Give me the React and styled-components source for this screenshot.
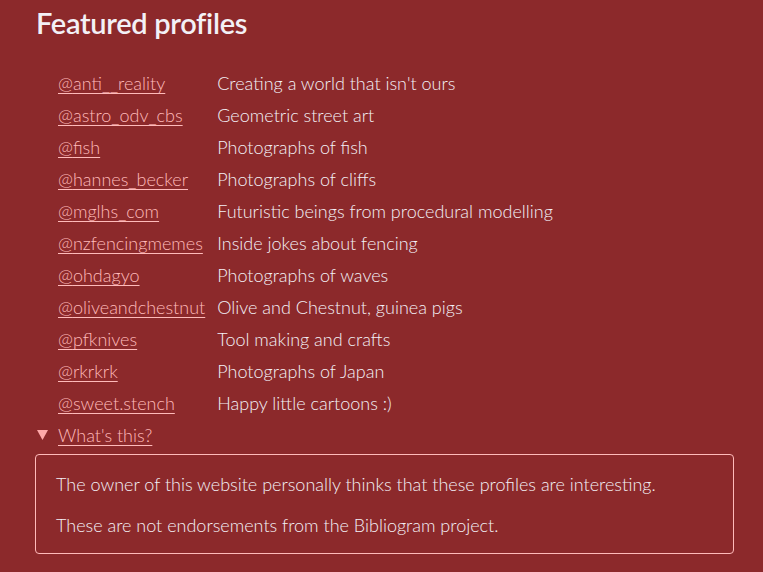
import React from 'react';
import styled, { createGlobalStyle } from 'styled-components';

const GlobalStyle = createGlobalStyle`
  html, body {
    margin: 0;
    padding: 0;
    background: #8c292b;
  }
  body {
    font-family: Lato, "Open Sans", sans-serif;
    color: #f3f0f6;
  }
`;

const Page = styled.main`
  padding: 4px 29px 20px 35px;
`;

const Title = styled.h2`
  margin: 0 0 0 1px;
  font-size: 29px;
  font-weight: 600;
  line-height: 38px;
  letter-spacing: -0.3px;
`;

const ProfileTable = styled.div`
  display: grid;
  grid-template-columns: max-content 1fr;
  column-gap: 12px;
  margin: 25px 0 0 23px;
  font-size: 18px;
  font-weight: 300;
  line-height: 32px;
`;

const Handle = styled.a`
  color: #ffbaba;
  text-decoration: underline;
  text-underline-offset: 3px;
`;

const Description = styled.span`
  color: #f3f0f6;
`;

const Details = styled.details`
  margin-top: 3px;
  font-size: 18px;
  font-weight: 300;
`;

const Summary = styled.summary`
  color: #ffbaba;
  line-height: 26px;
  margin-left: 2px;
  cursor: pointer;
  list-style: none;
  display: flex;
  align-items: center;
  gap: 10px;

  &::-webkit-details-marker {
    display: none;
  }
`;

const Marker = styled.svg`
  width: 11px;
  height: 10px;
  color: #ffa9a9;

  polygon {
    fill: currentColor;
  }
`;

const SummaryText = styled.span`
  text-decoration: underline;
  text-underline-offset: 3px;
`;

const InfoBox = styled.div`
  margin-top: 6px;
  border: 1px solid #ffbaba;
  border-radius: 4px;
  padding: 16px 20px 15px;

  p {
    margin: 0;
    line-height: 26px;
  }
  p + p {
    margin-top: 15px;
  }
`;

const profiles = [
  ['anti__reality', "Creating a world that isn't ours"],
  ['astro_odv_cbs', 'Geometric street art'],
  ['fish', 'Photographs of fish'],
  ['hannes_becker', 'Photographs of cliffs'],
  ['mglhs_com', 'Futuristic beings from procedural modelling'],
  ['nzfencingmemes', 'Inside jokes about fencing'],
  ['ohdagyo', 'Photographs of waves'],
  ['oliveandchestnut', 'Olive and Chestnut, guinea pigs'],
  ['pfknives', 'Tool making and crafts'],
  ['rkrkrk', 'Photographs of Japan'],
  ['sweet.stench', 'Happy little cartoons :)'],
];

export default function App() {
  return (
    <>
      <GlobalStyle />
      <Page>
        <Title>Featured profiles</Title>
        <ProfileTable>
          {profiles.map(([name, desc]) => (
            <React.Fragment key={name}>
              <Handle href="#">@{name}</Handle>
              <Description>{desc}</Description>
            </React.Fragment>
          ))}
        </ProfileTable>
        <Details open>
          <Summary>
            <Marker viewBox="0 0 11 10">
              <polygon points="0,0 11,0 5.5,10" />
            </Marker>
            <SummaryText>What's this?</SummaryText>
          </Summary>
          <InfoBox>
            <p>The owner of this website personally thinks that these profiles are interesting.</p>
            <p>These are not endorsements from the Bibliogram project.</p>
          </InfoBox>
        </Details>
      </Page>
    </>
  );
}
